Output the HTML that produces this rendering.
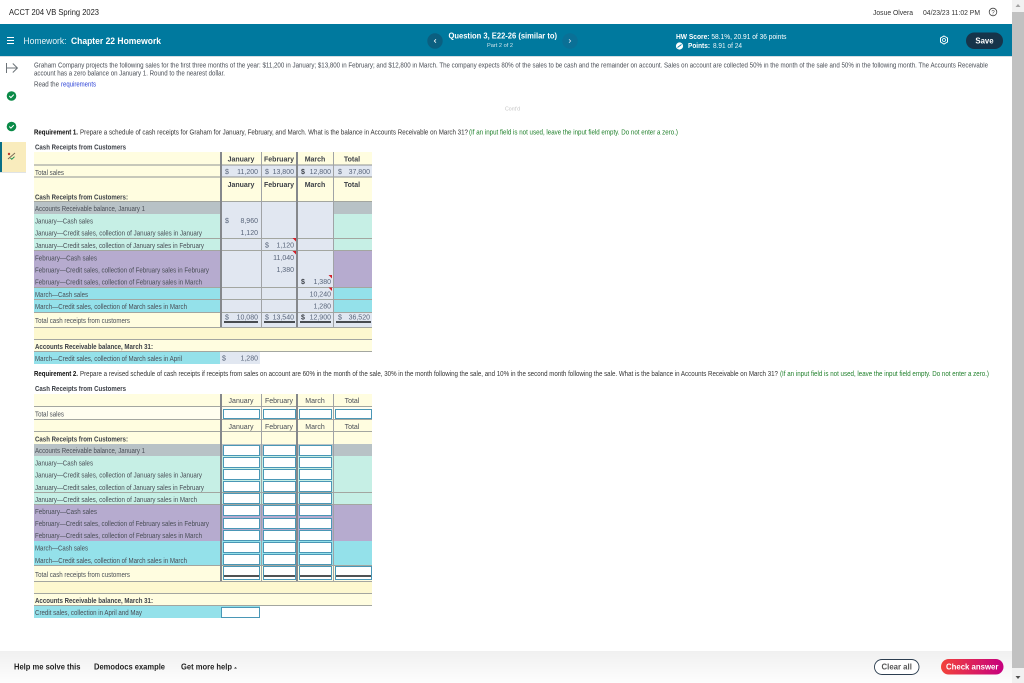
<!DOCTYPE html>
<html><head><meta charset="utf-8"><title>Homework</title>
<style>
html,body{margin:0;padding:0;background:#fff;width:1024px;height:683px;overflow:hidden}
svg{display:block;font-family:"Liberation Sans",sans-serif}
.s text{font-size:7px;fill:#494e56}
.s .b{font-weight:bold;fill:#3c4047}
.s .n{fill:#59657a}
.e{text-anchor:end}.m{text-anchor:middle}
.i{fill:#fff;stroke:#4a97b6;stroke-width:1}
.v1{stroke:#85888c;stroke-width:2}.v2{stroke:#a0a3a6;stroke-width:1}
.h{stroke:#a3a6a0;stroke-width:1}
</style></head><body>
<svg width="1024" height="683" viewBox="0 0 1024 683" xmlns="http://www.w3.org/2000/svg">
<defs>
<filter id="b" x="0" y="0" width="100%" height="100%"><feGaussianBlur stdDeviation="0.32"/></filter>
<filter id="c" x="0" y="0" width="100%" height="100%"><feGaussianBlur stdDeviation="0.2"/></filter>
<linearGradient id="g" x1="0" x2="1" y1="0" y2="0"><stop offset="0" stop-color="#f2433a"/><stop offset="1" stop-color="#c6007e"/></linearGradient>
<linearGradient id="f" x1="0" x2="0" y1="0" y2="1"><stop offset="0" stop-color="#f0f0f0"/><stop offset="1" stop-color="#fdfdfd"/></linearGradient>
</defs>
<rect width="1024" height="683" fill="#fff"/>

<!-- top strip -->
<g filter="url(#c)">
<text x="9" y="15" font-size="8.5" fill="#222" textLength="90" lengthAdjust="spacingAndGlyphs">ACCT 204 VB Spring 2023</text>
<text x="873" y="15" font-size="7.5" fill="#333" textLength="40" lengthAdjust="spacingAndGlyphs">Josue Olvera</text>
<text x="923" y="15" font-size="7.5" fill="#333" textLength="57" lengthAdjust="spacingAndGlyphs">04/23/23 11:02 PM</text>
</g>
<circle cx="993" cy="12" r="3.8" fill="none" stroke="#444" stroke-width=".8"/>
<text x="993" y="14.5" font-size="6" fill="#444" text-anchor="middle">?</text>

<!-- teal header -->
<rect x="0" y="24" width="1012" height="32" fill="#00799e"/>
<rect x="0" y="56" width="1012" height="1" fill="#d5dde2"/>
<path d="M7 37.5h7M7 40.5h7M7 43.5h7" stroke="#fff" stroke-width="1"/>
<circle cx="435" cy="41" r="7.7" fill="#0b5f80"/>
<path d="M436 39.3l-1.7 1.7 1.7 1.7" fill="none" stroke="#fff" stroke-width=".8"/>
<circle cx="570" cy="41" r="7.7" fill="#0a7096"/>
<path d="M569 39.3l1.7 1.7-1.7 1.7" fill="none" stroke="#cde" stroke-width=".8"/>
<g filter="url(#c)">
<text x="23.5" y="44" font-size="9.5" fill="#e8f3f7" textLength="43" lengthAdjust="spacingAndGlyphs">Homework:</text>
<text x="71" y="44" font-size="9.5" font-weight="bold" fill="#fff" textLength="90" lengthAdjust="spacingAndGlyphs">Chapter 22 Homework</text>
<text x="448.5" y="38.5" font-size="8" font-weight="bold" fill="#fff" textLength="108.5" lengthAdjust="spacingAndGlyphs">Question 3, E22-26 (similar to)</text>
<text x="487" y="47" font-size="5.5" fill="#cfe4ec" textLength="26" lengthAdjust="spacingAndGlyphs">Part 2 of 2</text>
<text x="676" y="39" font-size="7.5" fill="#fff" textLength="110.5" lengthAdjust="spacingAndGlyphs"><tspan font-weight="bold">HW Score:</tspan> 58.1%, 20.91 of 36 points</text>
<text x="688" y="48" font-size="7.5" font-weight="bold" fill="#fff" textLength="22" lengthAdjust="spacingAndGlyphs">Points:</text>
<text x="713" y="48" font-size="7.5" fill="#e8f3f7" textLength="29" lengthAdjust="spacingAndGlyphs">8.91 of 24</text>
</g>
<circle cx="679.5" cy="46" r="3.6" fill="#fff"/>
<path d="M677.5 47.5l4-3" stroke="#00799e" stroke-width=".8"/>
<path d="M944 36l3.5 2v4L944 44l-3.5-2v-4z" fill="none" stroke="#fff" stroke-width="1"/>
<circle cx="944" cy="40" r="1.5" fill="none" stroke="#fff" stroke-width=".8"/>
<rect x="966" y="32.5" width="37" height="16.5" rx="8.2" fill="#16344a"/>
<text x="984.5" y="43.5" font-size="7.8" font-weight="bold" fill="#fff" text-anchor="middle">Save</text>

<!-- left rail -->
<path d="M6.5 63v10M6.5 68h10.5M12.800 63.5l4.600 4.500-4.600 4.500" fill="none" stroke="#6c7378" stroke-width="1"/>
<circle cx="11.5" cy="96" r="4.8" fill="#0a8a47"/>
<path d="M9.300 96l1.600 1.600 2.900-3" fill="none" stroke="#fff" stroke-width="1"/>
<circle cx="11.5" cy="126.5" r="4.8" fill="#0a8a47"/>
<path d="M9.300 126.500l1.600 1.600 2.900-3" fill="none" stroke="#fff" stroke-width="1"/>
<rect x="0" y="142" width="26" height="31" fill="#f9ecbd"/>
<rect x="0" y="142" width="2" height="30" fill="#0a6f86"/>
<rect x="0" y="172" width="26" height="1" fill="#dfe3e6"/>
<path d="M8 159l7-6" stroke="#7a6a55" stroke-width=".9"/>
<circle cx="9" cy="154" r="1.2" fill="#c0392b"/>
<path d="M10.500 158l1.300 1.300 2.700-2.600" fill="none" stroke="#0a8a47" stroke-width=".9"/>

<!-- scrollbar -->
<rect x="1012" y="0" width="12" height="683" fill="#f1f1f1"/>
<rect x="1012" y="12" width="12" height="656" fill="#c1c1c1"/>
<path d="M1015.500 7l2.500-3 2.500 3z" fill="#a3a3a3"/>
<path d="M1015.500 676l2.500 3 2.500-3z" fill="#505050"/>

<!-- intro -->
<g class="s" filter="url(#b)">
<text x="34" y="67.5" textLength="954" lengthAdjust="spacingAndGlyphs">Graham Company projects the following sales for the first three months of the year: $11,200 in January; $13,800 in February; and $12,800 in March. The company expects 80% of the sales to be cash and the remainder on account. Sales on account are collected 50% in the month of the sale and 50% in the following month. The Accounts Receivable</text>
<text x="34" y="75.5" textLength="191" lengthAdjust="spacingAndGlyphs">account has a zero balance on January 1. Round to the nearest dollar.</text>
<text x="34" y="86.5" textLength="25" lengthAdjust="spacingAndGlyphs">Read the</text>
<text x="61" y="86.5" textLength="35" lengthAdjust="spacingAndGlyphs" style="fill:#2a3fd6">requirements</text>
<text x="505" y="110.5" style="fill:#c4c4c4;font-size:5.5px" textLength="15" lengthAdjust="spacingAndGlyphs">Cont'd</text>

<text x="34" y="134.5" class="b" style="fill:#111" textLength="44" lengthAdjust="spacingAndGlyphs">Requirement 1.</text>
<text x="80" y="134.5" style="fill:#333" textLength="388" lengthAdjust="spacingAndGlyphs">Prepare a schedule of cash receipts for Graham for January, February, and March. What is the balance in Accounts Receivable on March 31?</text>
<text x="469" y="134.5" style="fill:#1f7f2a" textLength="209" lengthAdjust="spacingAndGlyphs">(If an input field is not used, leave the input field empty. Do not enter a zero.)</text>
</g>

<!-- TABLE 1 backgrounds -->
<rect x="34" y="152" width="338" height="13" fill="#fffde0"/>
<rect x="34" y="165" width="187" height="12" fill="#fffde0"/>
<rect x="221" y="165" width="151" height="12" fill="#e1e7f1"/>
<rect x="34" y="177" width="338" height="25" fill="#fffde0"/>
<rect x="34" y="202" width="338" height="12" fill="#b8c2c6"/>
<rect x="34" y="214" width="338" height="37" fill="#c6efe5"/>
<rect x="34" y="251" width="338" height="36" fill="#b6abcf"/>
<rect x="34" y="287" width="338" height="25" fill="#94e1ea"/>
<rect x="221" y="202" width="112" height="110" fill="#e1e7f1"/>
<rect x="34" y="312" width="338" height="15" fill="#fffde0"/>
<rect x="221" y="312" width="151" height="15" fill="#e1e7f1"/>
<rect x="34" y="327" width="338" height="12" fill="#fdf8cf"/>
<rect x="34" y="339" width="338" height="12.5" fill="#fffde0"/>
<rect x="34" y="351.5" width="186" height="12.5" fill="#94e1ea"/>
<rect x="220" y="351.5" width="40" height="12.5" fill="#e1e7f1"/>
<path class="h" d="M34 165h338M34 177h338M34 201.500h338M34 238.500h338M34 250.500h338M34 287.500h338M34 299.500h338M34 312.500h338M34 327.500h338M34 339.500h338M34 351.500h338"/>
<path d="M34 165h338M34 177h338" stroke="#8f9294" stroke-width="1"/>
<path class="v1" d="M221 152v175M297 152v175"/>
<path class="v2" d="M261.500 152v175M333.500 152v175"/>
<path d="M224 322h34M264 322h31M300 322h31M336 322h35" stroke="#15181c" stroke-width="1.400"/>
<path d="M296 238h-3.500l3.500 3.500zM296 251h-3.500l3.500 3.500zM332 275h-3.500l3.500 3.500zM332 287.500h-3.500l3.500 3.500z" fill="#d3202a"/>

<g class="s" filter="url(#b)">
<text x="35" y="149.5" class="b" textLength="91" lengthAdjust="spacingAndGlyphs">Cash Receipts from Customers</text>
<text x="241" y="161.5" class="m b">January</text><text x="279" y="161.5" class="m b">February</text><text x="315" y="161.5" class="m b">March</text><text x="352" y="161.5" class="m b">Total</text>
<text x="35" y="175" textLength="29" lengthAdjust="spacingAndGlyphs">Total sales</text>
<text x="225" y="174" class="n">$</text><text x="258" y="174" class="e n">11,200</text>
<text x="265" y="174" class="n">$</text><text x="294" y="174" class="e n">13,800</text>
<text x="301" y="174" class="b">$</text><text x="331" y="174" class="e n">12,800</text>
<text x="338" y="174" class="n">$</text><text x="370" y="174" class="e n">37,800</text>
<text x="241" y="187" class="m b">January</text><text x="279" y="187" class="m b">February</text><text x="315" y="187" class="m b">March</text><text x="352" y="187" class="m b">Total</text>
<text x="35" y="199.5" class="b" textLength="93" lengthAdjust="spacingAndGlyphs">Cash Receipts from Customers:</text>
<text x="35" y="211" textLength="110" lengthAdjust="spacingAndGlyphs">Accounts Receivable balance, January 1</text>
<text x="35" y="223.5" textLength="58" lengthAdjust="spacingAndGlyphs">January—Cash sales</text>
<text x="35" y="235.5" textLength="167" lengthAdjust="spacingAndGlyphs">January—Credit sales, collection of January sales in January</text>
<text x="35" y="248" textLength="169" lengthAdjust="spacingAndGlyphs">January—Credit sales, collection of January sales in February</text>
<text x="35" y="260.5" textLength="62" lengthAdjust="spacingAndGlyphs">February—Cash sales</text>
<text x="35" y="272.5" textLength="174" lengthAdjust="spacingAndGlyphs">February—Credit sales, collection of February sales in February</text>
<text x="35" y="284.5" textLength="167" lengthAdjust="spacingAndGlyphs">February—Credit sales, collection of February sales in March</text>
<text x="35" y="297" textLength="53" lengthAdjust="spacingAndGlyphs">March—Cash sales</text>
<text x="35" y="309" textLength="152" lengthAdjust="spacingAndGlyphs">March—Credit sales, collection of March sales in March</text>
<text x="35" y="323" textLength="95" lengthAdjust="spacingAndGlyphs">Total cash receipts from customers</text>
<text x="35" y="349" class="b" textLength="118" lengthAdjust="spacingAndGlyphs">Accounts Receivable balance, March 31:</text>
<text x="35" y="361" textLength="147" lengthAdjust="spacingAndGlyphs">March—Credit sales, collection of March sales in April</text>
<text x="225" y="223" class="n">$</text><text x="258" y="223" class="e n">8,960</text>
<text x="258" y="235" class="e n">1,120</text>
<text x="265" y="247.5" class="n">$</text><text x="294" y="247.5" class="e n">1,120</text>
<text x="294" y="260" class="e n">11,040</text>
<text x="294" y="272" class="e n">1,380</text>
<text x="301" y="284" class="b">$</text><text x="331" y="284" class="e n">1,380</text>
<text x="331" y="296.5" class="e n">10,240</text>
<text x="331" y="308.5" class="e n">1,280</text>
<text x="225" y="319.500" class="n">$</text><text x="258" y="319.500" class="e n">10,080</text>
<text x="265" y="319.500" class="n">$</text><text x="294" y="319.500" class="e n">13,540</text>
<text x="301" y="319.500" class="b">$</text><text x="331" y="319.500" class="e n">12,900</text>
<text x="338" y="319.500" class="n">$</text><text x="370" y="319.500" class="e n">36,520</text>
<text x="222" y="360.5" class="n">$</text><text x="258" y="360.5" class="e n">1,280</text>

<text x="34" y="376" class="b" style="fill:#111" textLength="44" lengthAdjust="spacingAndGlyphs">Requirement 2.</text>
<text x="80" y="376" style="fill:#333" textLength="698" lengthAdjust="spacingAndGlyphs">Prepare a revised schedule of cash receipts if receipts from sales on account are 60% in the month of the sale, 30% in the month following the sale, and 10% in the second month following the sale. What is the balance in Accounts Receivable on March 31?</text>
<text x="780" y="376" style="fill:#1f7f2a" textLength="209" lengthAdjust="spacingAndGlyphs">(If an input field is not used, leave the input field empty. Do not enter a zero.)</text>
</g>

<!-- TABLE 2 backgrounds -->
<rect x="34" y="394" width="338" height="12" fill="#fffde0"/>
<rect x="34" y="406" width="338" height="13" fill="#fffef0"/>
<rect x="34" y="419" width="338" height="25" fill="#fffde0"/>
<rect x="34" y="444" width="338" height="12" fill="#b8c2c6"/>
<rect x="34" y="456" width="338" height="48" fill="#c6efe5"/>
<rect x="34" y="504" width="338" height="37" fill="#b6abcf"/>
<rect x="34" y="541" width="338" height="24" fill="#94e1ea"/>
<rect x="34" y="565" width="338" height="16" fill="#fffde0"/>
<rect x="34" y="581" width="338" height="12" fill="#fdf8cf"/>
<rect x="34" y="593" width="338" height="12" fill="#fffde0"/>
<rect x="34" y="605" width="226" height="13" fill="#94e1ea"/>
<path class="h" d="M34 406.500h338M34 419.500h338M34 431.500h338M34 492.500h338M34 504.500h338M34 565.500h338M34 581.500h338M34 593.500h338M34 605.500h338"/>
<path class="v1" d="M221 394v187M297 394v187"/>
<path class="v2" d="M261.500 394v187M333.500 394v187"/>

<!-- inputs -->
<g transform="translate(.5 .5)">
<rect class="i" x="223" y="409" width="36" height="9"/><rect class="i" x="263" y="409" width="32" height="9"/><rect class="i" x="299" y="409" width="32" height="9"/><rect class="i" x="335" y="409" width="36" height="9"/>
<rect class="i" x="223" y="445" width="36" height="10"/><rect class="i" x="263" y="445" width="32" height="10"/><rect class="i" x="299" y="445" width="32" height="10"/>
<rect class="i" x="223" y="457" width="36" height="10"/><rect class="i" x="263" y="457" width="32" height="10"/><rect class="i" x="299" y="457" width="32" height="10"/>
<rect class="i" x="223" y="469" width="36" height="10"/><rect class="i" x="263" y="469" width="32" height="10"/><rect class="i" x="299" y="469" width="32" height="10"/>
<rect class="i" x="223" y="481" width="36" height="10"/><rect class="i" x="263" y="481" width="32" height="10"/><rect class="i" x="299" y="481" width="32" height="10"/>
<rect class="i" x="223" y="493" width="36" height="10"/><rect class="i" x="263" y="493" width="32" height="10"/><rect class="i" x="299" y="493" width="32" height="10"/>
<rect class="i" x="223" y="505" width="36" height="10"/><rect class="i" x="263" y="505" width="32" height="10"/><rect class="i" x="299" y="505" width="32" height="10"/>
<rect class="i" x="223" y="518" width="36" height="10"/><rect class="i" x="263" y="518" width="32" height="10"/><rect class="i" x="299" y="518" width="32" height="10"/>
<rect class="i" x="223" y="530" width="36" height="10"/><rect class="i" x="263" y="530" width="32" height="10"/><rect class="i" x="299" y="530" width="32" height="10"/>
<rect class="i" x="223" y="542" width="36" height="10"/><rect class="i" x="263" y="542" width="32" height="10"/><rect class="i" x="299" y="542" width="32" height="10"/>
<rect class="i" x="223" y="554" width="36" height="10"/><rect class="i" x="263" y="554" width="32" height="10"/><rect class="i" x="299" y="554" width="32" height="10"/>
<rect class="i" x="223" y="566" width="36" height="13"/><rect class="i" x="263" y="566" width="32" height="13"/><rect class="i" x="299" y="566" width="32" height="13"/><rect class="i" x="335" y="566" width="36" height="13"/>
<rect class="i" x="221" y="607" width="38" height="10"/>
</g>
<path d="M224 576h35M264 576h31M300 576h31M336 576h35" stroke="#15181c" stroke-width="1.600"/>

<g class="s" filter="url(#b)">
<text x="35" y="391" class="b" textLength="91" lengthAdjust="spacingAndGlyphs">Cash Receipts from Customers</text>
<text x="241" y="403" class="m">January</text><text x="279" y="403" class="m">February</text><text x="315" y="403" class="m">March</text><text x="352" y="403" class="m">Total</text>
<text x="35" y="416.5" textLength="29" lengthAdjust="spacingAndGlyphs">Total sales</text>
<text x="241" y="429" class="m">January</text><text x="279" y="429" class="m">February</text><text x="315" y="429" class="m">March</text><text x="352" y="429" class="m">Total</text>
<text x="35" y="441.5" class="b" textLength="93" lengthAdjust="spacingAndGlyphs">Cash Receipts from Customers:</text>
<text x="35" y="453" textLength="110" lengthAdjust="spacingAndGlyphs">Accounts Receivable balance, January 1</text>
<text x="35" y="465.5" textLength="58" lengthAdjust="spacingAndGlyphs">January—Cash sales</text>
<text x="35" y="477.5" textLength="167" lengthAdjust="spacingAndGlyphs">January—Credit sales, collection of January sales in January</text>
<text x="35" y="490" textLength="169" lengthAdjust="spacingAndGlyphs">January—Credit sales, collection of January sales in February</text>
<text x="35" y="502" textLength="162" lengthAdjust="spacingAndGlyphs">January—Credit sales, collection of January sales in March</text>
<text x="35" y="514" textLength="62" lengthAdjust="spacingAndGlyphs">February—Cash sales</text>
<text x="35" y="526" textLength="174" lengthAdjust="spacingAndGlyphs">February—Credit sales, collection of February sales in February</text>
<text x="35" y="538" textLength="167" lengthAdjust="spacingAndGlyphs">February—Credit sales, collection of February sales in March</text>
<text x="35" y="550.5" textLength="53" lengthAdjust="spacingAndGlyphs">March—Cash sales</text>
<text x="35" y="563" textLength="152" lengthAdjust="spacingAndGlyphs">March—Credit sales, collection of March sales in March</text>
<text x="35" y="577" textLength="95" lengthAdjust="spacingAndGlyphs">Total cash receipts from customers</text>
<text x="35" y="603" class="b" textLength="118" lengthAdjust="spacingAndGlyphs">Accounts Receivable balance, March 31:</text>
<text x="35" y="615" textLength="107" lengthAdjust="spacingAndGlyphs">Credit sales, collection in April and May</text>
</g>

<!-- bottom bar -->
<rect x="0" y="651" width="1012" height="32" fill="url(#f)"/>
<g filter="url(#c)">
<text x="14" y="669.5" font-size="8" font-weight="bold" fill="#222" textLength="66.5" lengthAdjust="spacingAndGlyphs">Help me solve this</text>
<text x="94" y="669.5" font-size="8" font-weight="bold" fill="#222" textLength="71" lengthAdjust="spacingAndGlyphs">Demodocs example</text>
<text x="181" y="669.5" font-size="8" font-weight="bold" fill="#222" textLength="51" lengthAdjust="spacingAndGlyphs">Get more help</text>
</g>
<path d="M234 668.500l1.500-1.500 1.500 1.500z" fill="#222"/>
<rect x="874.5" y="659.5" width="44.5" height="15" rx="7.5" fill="#fff" stroke="#2c3e50" stroke-width=".9"/>
<text x="896.7" y="669.7" font-size="7.8" font-weight="bold" fill="#555" text-anchor="middle">Clear all</text>
<rect x="941" y="659" width="62.5" height="15.5" rx="7.7" fill="url(#g)"/>
<text x="972.2" y="669.7" font-size="7.8" font-weight="bold" fill="#fff" text-anchor="middle">Check answer</text>
</svg>
</body></html>
